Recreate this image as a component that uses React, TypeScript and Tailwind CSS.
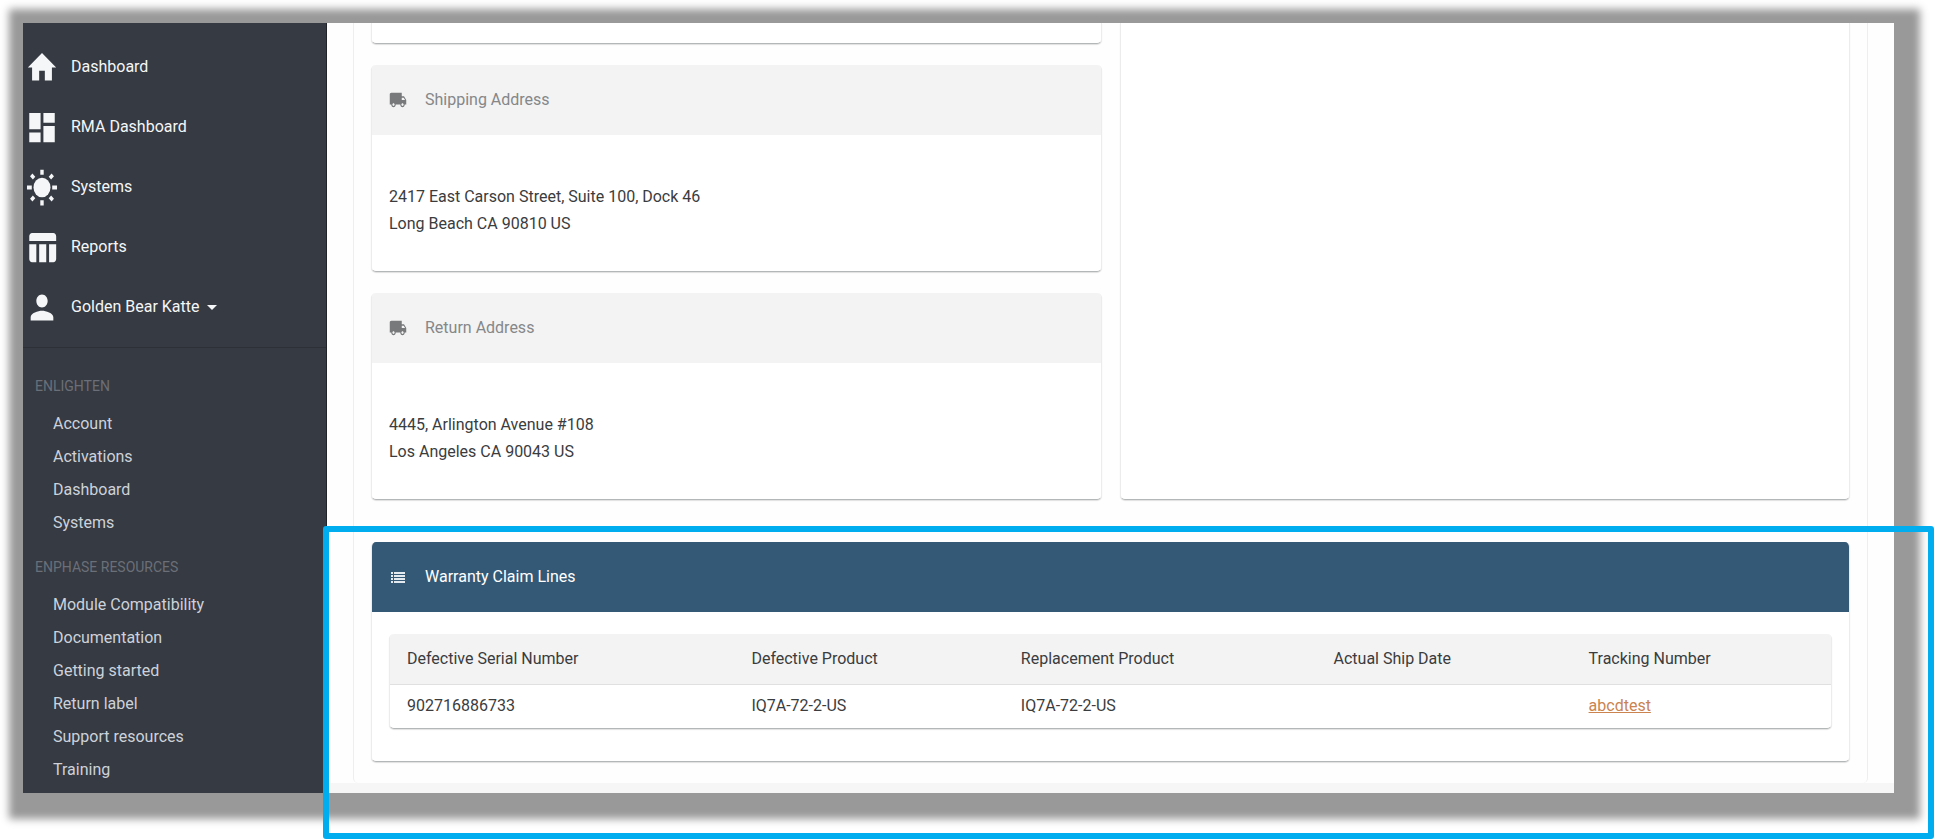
import type { ComponentType, ReactNode, SVGProps } from "react";
import {
  MdDashboard,
  MdHome,
  MdLocalShipping,
  MdPerson,
  MdTableChart,
} from "react-icons/md";

type IconType = ComponentType<SVGProps<SVGSVGElement>>;

function SunIcon(props: SVGProps<SVGSVGElement>) {
  return (
    <svg viewBox="0 0 24 24" fill="currentColor" {...props}>
      <circle cx="12" cy="12" r="6" />
      <path
        d="M12 1v3.2M12 19.8V23M1.4 12h3.4M19.2 12h3.4M4.4 4.2l2 2M17.6 17.8l2 2M19.6 4.2l-2 2M6.4 17.8l-2 2"
        stroke="currentColor"
        strokeWidth="2.4"
      />
    </svg>
  );
}

function ListIcon(props: SVGProps<SVGSVGElement>) {
  return (
    <svg viewBox="0 0 14 11" fill="currentColor" {...props}>
      <path d="M0 0h2v2H0zM0 3h2v2H0zM0 6h2v2H0zM0 9h2v2H0zM3 0h11v2H3zM3 3h11v2H3zM3 6h11v2H3zM3 9h11v2H3z" />
    </svg>
  );
}

const mainLinks: { label: string; icon: IconType }[] = [
  { label: "Dashboard", icon: MdHome },
  { label: "RMA Dashboard", icon: MdDashboard },
  { label: "Systems", icon: SunIcon },
  { label: "Reports", icon: MdTableChart },
];

const linkGroups = [
  {
    title: "ENLIGHTEN",
    links: ["Account", "Activations", "Dashboard", "Systems"],
  },
  {
    title: "ENPHASE RESOURCES",
    links: [
      "Module Compatibility",
      "Documentation",
      "Getting started",
      "Return label",
      "Support resources",
      "Training",
    ],
  },
];

const claimLines = [
  {
    serial: "902716886733",
    defective: "IQ7A-72-2-US",
    replacement: "IQ7A-72-2-US",
    shipDate: "",
    tracking: "abcdtest",
  },
];

const cardClass =
  "overflow-hidden rounded-[5px] border-x border-b border-x-[#ececec] border-b-[#b4b7b7] bg-white shadow-[0_1px_1px_rgba(0,0,0,0.12)]";

function Sidebar() {
  return (
    <nav className="w-[304px] shrink-0 border-r border-[#202327] bg-[#363a42] pt-[14px] text-[#f4f6f8]">
      <div className="border-b border-[#2d3036] pb-[10px]">
        {mainLinks.map(({ label, icon: Icon }) => (
          <a
            key={label}
            href="#"
            className="flex h-[60px] items-center gap-3 pl-0.5"
          >
            <Icon
              className="h-[39px] w-[34px] shrink-0"
              preserveAspectRatio="none"
              aria-hidden="true"
            />
            {label}
          </a>
        ))}
        <button
          type="button"
          className="flex h-[60px] w-full items-center gap-3 pl-0.5 text-left"
        >
          <MdPerson
            className="h-[39px] w-[34px] shrink-0"
            preserveAspectRatio="none"
            aria-hidden="true"
          />
          <span className="flex items-center gap-2">
            Golden Bear Katte
            <svg viewBox="0 0 10 5" className="h-[5px] w-[10px]" aria-hidden="true">
              <path d="M0 0h10L5 5z" fill="currentColor" />
            </svg>
          </span>
        </button>
      </div>

      <div className="flex flex-col gap-4 pt-[26px]">
        {linkGroups.map((group) => (
          <div key={group.title}>
            <h2 className="pl-3 text-sm leading-6 text-[#6b6f78]">
              {group.title}
            </h2>
            <ul className="mt-[9px]">
              {group.links.map((link) => (
                <li key={link} className="h-[33px] pl-[30px] leading-[33px]">
                  <a href="#" className="text-[#cdd2da]">
                    {link}
                  </a>
                </li>
              ))}
            </ul>
          </div>
        ))}
      </div>
    </nav>
  );
}

function AddressCard({ title, lines }: { title: string; lines: string[] }) {
  return (
    <section className={cardClass}>
      <h2 className="flex h-[70px] items-center gap-[18px] bg-[#f3f3f3] pl-[17px] text-[#858789]">
        <MdLocalShipping
          className="h-[22px] w-[18px] text-[#77797b]"
          preserveAspectRatio="none"
          aria-hidden="true"
        />
        {title}
      </h2>
      <address className="pt-12 pr-4 pb-[34px] pl-[17px] leading-[27px] not-italic">
        {lines.map((line) => (
          <span key={line} className="block">
            {line}
          </span>
        ))}
      </address>
    </section>
  );
}

function Th({ children }: { children: ReactNode }) {
  return (
    <th scope="col" className="px-[17px] text-left font-normal">
      {children}
    </th>
  );
}

function ClaimLines() {
  return (
    <section className={`mt-[42px] ${cardClass}`}>
      <h2 className="flex h-[70px] items-center gap-[20px] bg-[#345976] pl-[19px] text-white">
        <ListIcon
          className="h-[11px] w-[14px] text-[#e3eaf0]"
          preserveAspectRatio="none"
          aria-hidden="true"
        />
        Warranty Claim Lines
      </h2>
      <div className="px-[17px] pt-[22px] pb-8">
        <div className={cardClass}>
          <table className="w-full table-fixed">
            <colgroup>
              <col className="w-[23.9%]" />
              <col className="w-[18.7%]" />
              <col className="w-[21.7%]" />
              <col className="w-[17.7%]" />
              <col />
            </colgroup>
            <thead>
              <tr className="h-[50px] border-b border-[#e0e0e0] bg-[#f3f3f3]">
                <Th>Defective Serial Number</Th>
                <Th>Defective Product</Th>
                <Th>Replacement Product</Th>
                <Th>Actual Ship Date</Th>
                <Th>Tracking Number</Th>
              </tr>
            </thead>
            <tbody>
              {claimLines.map((line) => (
                <tr key={line.serial} className="h-11">
                  <td className="px-[17px]">{line.serial}</td>
                  <td className="px-[17px]">{line.defective}</td>
                  <td className="px-[17px]">{line.replacement}</td>
                  <td className="px-[17px]">{line.shipDate}</td>
                  <td className="px-[17px]">
                    <a href="#" className="text-[#cb8350] underline">
                      {line.tracking}
                    </a>
                  </td>
                </tr>
              ))}
            </tbody>
          </table>
        </div>
      </div>
    </section>
  );
}

export default function App() {
  return (
    <div className="relative min-h-screen overflow-hidden bg-white pt-[23px] pr-10 pb-[46px] pl-[23px] font-[Roboto,'Liberation_Sans',sans-serif] text-base text-[#3a3c3e]">
      <div className="flex bg-[#f6f6f6] shadow-[6px_6px_8px_20px_#999]">
        <Sidebar />
        <main className="min-w-0 grow pb-[10px]">
          <div className="bg-[#fefefe] px-[26px]">
            <div className="rounded-b-[5px] border-x border-[#eeeeee] px-[17px] pb-[21px]">
              <div className="grid grid-cols-2 gap-[18px]">
                <div className="flex flex-col gap-[21px]">
                  <div className="h-[21px] rounded-b-[5px] border-x border-b border-x-[#ececec] border-b-[#b4b7b7] bg-white shadow-[0_1px_1px_rgba(0,0,0,0.12)]" />
                  <AddressCard
                    title="Shipping Address"
                    lines={[
                      "2417 East Carson Street, Suite 100, Dock 46",
                      "Long Beach CA 90810 US",
                    ]}
                  />
                  <AddressCard
                    title="Return Address"
                    lines={["4445, Arlington Avenue #108", "Los Angeles CA 90043 US"]}
                  />
                </div>
                <div className="rounded-b-[5px] border-x border-b border-x-[#ececec] border-b-[#b4b7b7] bg-white shadow-[0_1px_1px_rgba(0,0,0,0.12)]" />
              </div>
              <ClaimLines />
            </div>
          </div>
        </main>
      </div>

      {/* highlight frame over the claim lines section */}
      <div className="pointer-events-none absolute top-[526px] right-0 bottom-0 left-[323px] rounded-[3px] border-6 border-[#00aeef]" />
    </div>
  );
}
